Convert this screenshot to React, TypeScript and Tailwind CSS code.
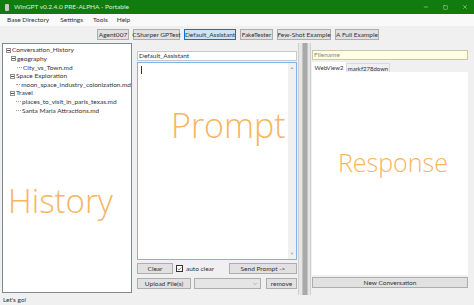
import { Minus, Square, X, ChevronDown, Check } from "lucide-react";

const font = { fontFamily: '"Segoe UI", Lato, "Liberation Sans", sans-serif' };

const presets = [
  { label: "Agent007", w: "w-[32px]" },
  { label: "CSharper GPTest", w: "w-[47px]" },
  { label: "Default_Assistant", w: "w-[52px]", active: true },
  { label: "FakeTester", w: "w-[33px]" },
  { label: "Few-Shot Example", w: "w-[54px]" },
  { label: "A Full Example", w: "w-[44px]" },
];

const tree = [
  { label: "Conversation_History", indent: "pl-[9px]", box: true },
  { label: "geography", indent: "pl-[14px]", box: true },
  { label: "City_vs_Town.md", indent: "pl-[20px]" },
  { label: "Space Exploration", indent: "pl-[13px]", box: true },
  { label: "moon_space_industry_colonization.md", indent: "pl-[19px]" },
  { label: "Travel", indent: "pl-[13px]", box: true },
  { label: "places_to_visit_in_paris_texas.md", indent: "pl-[19px]" },
  { label: "Santa Maria Attractions.md", indent: "pl-[19px]" },
];

function Btn({ children, className = "" }: { children: React.ReactNode; className?: string }) {
  return (
    <div
      className={`shrink-0 flex items-center justify-center whitespace-nowrap h-[11px] border border-[#adadad] bg-[#e1e1e1] text-[6.5px] text-[#333] ${className}`}
    >
      {children}
    </div>
  );
}

function Watermark({ text, className }: { text: string; className: string }) {
  return (
    <span
      className={`absolute text-[#f7b562] font-light leading-none whitespace-nowrap pointer-events-none ${className}`}
      style={{ fontFamily: '"Open Sans", "Noto Sans", sans-serif' }}
    >
      {text}
    </span>
  );
}

export default function App() {
  return (
    <div className="w-[474px] h-[305px] flex flex-col bg-[#f0f0f0] overflow-hidden" style={font}>
      {/* title bar */}
      <div className="h-[14px] shrink-0 bg-[#107c10] flex items-center text-white">
        <div className="w-[4px] h-[7px] ml-[5px] bg-[#c8c8c8] rounded-[1px]" />
        <span className="ml-[5px] text-[6.5px] text-[#dcefdc]">WinGPT v0.2.4.0 PRE-ALPHA - Portable</span>
        <div className="ml-auto flex items-center gap-[14px] pr-[6px] text-white/80">
          <Minus size={6} strokeWidth={2} />
          <Square size={5} strokeWidth={2} />
          <X size={6} strokeWidth={2} />
        </div>
      </div>

      {/* menu bar */}
      <div className="h-[12px] shrink-0 bg-[#f9f9f9] flex items-center text-[6.5px] text-[#333]">
        <span className="ml-[7px]">Base Directory</span>
        <span className="ml-[11px]">Settings</span>
        <span className="ml-[10px]">Tools</span>
        <span className="ml-[9px]">Help</span>
      </div>

      {/* preset buttons */}
      <div className="h-[17px] shrink-0 flex items-center pl-[97px] gap-[4px]">
        {presets.map((p) => (
          <div
            key={p.label}
            className={`shrink-0 flex items-center justify-center whitespace-nowrap h-[11px] border text-[6.5px] text-[#333] ${p.w} ${
              p.active ? "bg-[#cce4f7] border-[#0078d7]" : "bg-[#e1e1e1] border-[#adadad]"
            }`}
          >
            {p.label}
          </div>
        ))}
      </div>

      {/* main area */}
      <div className="h-[252px] shrink-0 flex">
        {/* history */}
        <div className="relative shrink-0 ml-[2px] w-[130px] h-[250px] bg-white border border-[#828790] pt-[2px] overflow-hidden">
          {tree.map((t) => (
            <div key={t.label} className={`flex items-center whitespace-nowrap h-[8.6px] text-[6.5px] text-[#333] ${t.indent}`}>
              {t.box ? (
                <span className="w-[5px] h-[5px] mr-[1px] -ml-[6px] border border-[#919191] flex items-center justify-center">
                  <span className="w-[3px] h-px bg-[#555]" />
                </span>
              ) : (
                <span className="w-[5px] h-px -ml-[6px] mr-[1px] border-t border-dotted border-[#a0a0a0]" />
              )}
              {t.label}
            </div>
          ))}
          <Watermark text="History" className="left-[5px] top-[140px] text-[33px]" />
        </div>

        {/* prompt column */}
        <div className="shrink-0 ml-[5px] w-[160px] flex flex-col">
          <div className="mt-[8px] h-[10px] border border-[#c8c8c8] bg-white flex items-center pl-[1px] text-[6.5px] text-[#333]">
            Default_Assistant
          </div>
          <div className="relative mt-[1px] h-[198px] bg-white border border-[#7eb4ea] flex overflow-hidden">
            <div className="flex-1 pl-[3px] pt-[3px]">
              <div className="w-px h-[8px] bg-[#333]" />
            </div>
            <div className="w-[8px] bg-[#f0f0f0] flex flex-col items-center justify-between py-[3px] text-[#aaa]">
              <span className="text-[4px] leading-none">▲</span>
              <span className="text-[4px] leading-none">▼</span>
            </div>
            <Watermark text="Prompt" className="left-[33px] top-[45px] text-[34px]" />
          </div>
          <div className="mt-[3px] flex items-center">
            <Btn className="w-[36px]">Clear</Btn>
            <span className="ml-[3px] w-[7px] h-[7px] border border-[#333] bg-white flex items-center justify-center">
              <Check size={6} strokeWidth={3} className="text-[#333]" />
            </span>
            <span className="ml-[3px] text-[6.5px] text-[#333]">auto clear</span>
            <Btn className="ml-auto w-[68px]">Send Prompt -&gt;</Btn>
          </div>
          <div className="mt-[4px] flex items-center">
            <Btn className="w-[54px]">Upload File(s)</Btn>
            <div className="ml-[3px] w-[67px] h-[11px] border border-[#adadad] bg-[#e5e5e5] flex items-center justify-end pr-[2px] text-[#666]">
              <ChevronDown size={6} strokeWidth={1.5} />
            </div>
            <Btn className="ml-auto w-[31px]">remove</Btn>
          </div>
        </div>

        {/* splitter */}
        <div className="shrink-0 ml-[1px] w-[13px] h-[252px] flex justify-center bg-[#e6e6e6] border-x border-[#d0d0d0]">
          <div className="w-[6px] h-full bg-[#a9a9a9] border-x border-[#c4c4c4]" />
        </div>

        {/* response column */}
        <div className="shrink-0 ml-[1px] w-[156px] flex flex-col">
          <div className="mt-[7px] h-[10px] border border-[#c8c8a8] bg-[#ffffe1] flex items-center pl-[1px] text-[6.5px] text-[#888]">
            Filename
          </div>
          <div className="mt-[2px] flex items-end h-[10px]">
            <div className="w-[34px] h-[10px] bg-white flex items-center justify-center whitespace-nowrap text-[6px] text-[#333]">
              WebView2
            </div>
            <div className="w-[44px] h-[9px] bg-[#f0f0f0] border border-b-0 border-[#dadada] flex items-center justify-center whitespace-nowrap text-[6px] text-[#333]">
              markf278down
            </div>
          </div>
          <div className="relative h-[203px] bg-white overflow-hidden">
            <Watermark text="Response" className="left-[26px] top-[78px] text-[25px]" />
          </div>
          <Btn className="mt-[2px] w-[156px] h-[11px]">New Conversation</Btn>
        </div>
      </div>

      {/* status bar */}
      <div className="flex-1 flex items-center pl-[3px] text-[6.5px] text-[#333] bg-[#f0f0f0]">Let's go!</div>
    </div>
  );
}
